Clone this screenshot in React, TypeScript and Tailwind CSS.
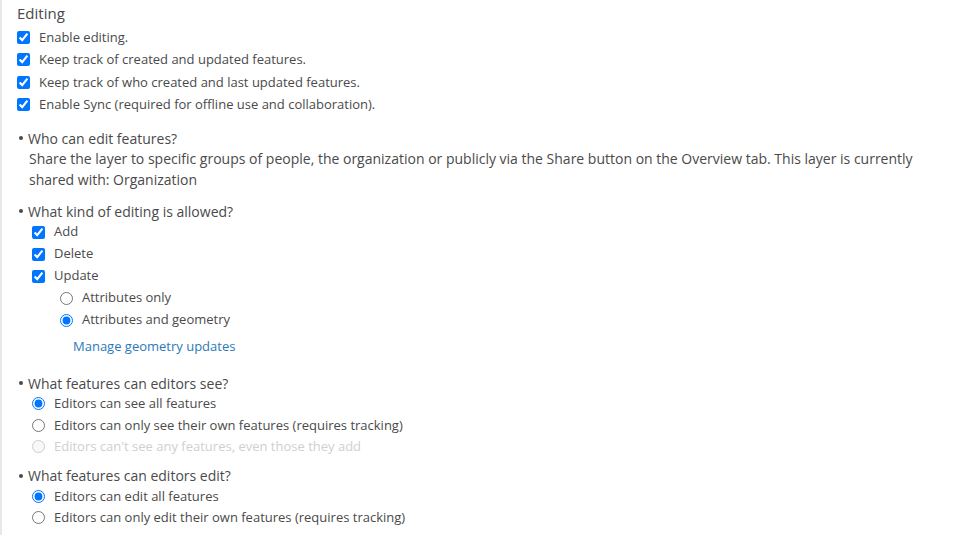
import React from "react";

const font = { fontFamily: "'Open Sans', Lato, sans-serif" };

function Check({ label, h = "h-[22.5px]" }: { label: string; h?: string }) {
  return (
    <label className={`flex items-center ${h} gap-[9px] text-[13px] text-[#4a4a4a]`}>
      <input type="checkbox" defaultChecked className="m-0 w-[13px] h-[13px] accent-[#0075ff]" />
      <span>{label}</span>
    </label>
  );
}

function Radio({ label, checked, disabled, name, h = "h-[21.5px]" }: { label: string; checked?: boolean; disabled?: boolean; name: string; h?: string }) {
  return (
    <label className={`flex items-center ${h} gap-[9px] text-[13px] ${disabled ? "text-[#cfcfcf]" : "text-[#4a4a4a]"}`}>
      <input type="radio" name={name} defaultChecked={checked} disabled={disabled} className="m-0 w-[13px] h-[13px]" />
      <span>{label}</span>
    </label>
  );
}

function Question({ text }: { text: string }) {
  return (
    <div className="flex items-center h-[22px] text-[14px] text-[#4a4a4a]">
      <span className="w-[4px] h-[4px] rounded-full bg-[#4a4a4a] ml-[17px] mr-[5px]" />
      <span>{text}</span>
    </div>
  );
}

export default function App() {
  return (
    <div className="w-[954px] h-[535px] bg-white overflow-hidden" style={font}>
      <div className="h-full border-l-2 border-[#e8e8e8] pt-[2px]">
        <div className="pl-[15px] h-[22px] flex items-center text-[15px] text-[#4a4a4a]">Editing</div>
        <div className="pl-[15px] flex flex-col mt-[2px]">
          <Check label="Enable editing." />
          <Check label="Keep track of created and updated features." />
          <Check label="Keep track of who created and last updated features." />
          <Check label="Enable Sync (required for offline use and collaboration)." />
        </div>

        <div className="mt-[11px]">
          <Question text="Who can edit features?" />
          <p className="-mt-px pl-[27px] pr-[30px] text-[14px] leading-[21px] text-[#4a4a4a]">
            Share the layer to specific groups of people, the organization or publicly via the Share button on the Overview tab. This layer is currently shared with: Organization
          </p>
        </div>

        <div className="mt-[10px]">
          <Question text="What kind of editing is allowed?" />
          <div className="pl-[30px] flex flex-col -mt-px">
            <Check label="Add" h="h-[22px]" />
            <Check label="Delete" h="h-[22px]" />
            <Check label="Update" h="h-[22px]" />
            <div className="pl-[28px] flex flex-col">
              <Radio name="upd" label="Attributes only" h="h-[22px]" />
              <Radio name="upd" label="Attributes and geometry" checked h="h-[22px]" />
            </div>
            <div className="pl-[41px] h-[22px] mt-[5px] flex items-center text-[13px] text-[#2b79b8]">Manage geometry updates</div>
          </div>
        </div>

        <div className="mt-[14px]">
          <Question text="What features can editors see?" />
          <div className="pl-[30px] flex flex-col -mt-px">
            <Radio name="see" label="Editors can see all features" checked />
            <Radio name="see" label="Editors can only see their own features (requires tracking)" />
            <Radio name="see" label="Editors can't see any features, even those they add" disabled />
          </div>
        </div>

        <div className="mt-[7px]">
          <Question text="What features can editors edit?" />
          <div className="pl-[30px] flex flex-col -mt-px">
            <Radio name="edt" label="Editors can edit all features" checked />
            <Radio name="edt" label="Editors can only edit their own features (requires tracking)" />
          </div>
        </div>
      </div>
    </div>
  );
}
